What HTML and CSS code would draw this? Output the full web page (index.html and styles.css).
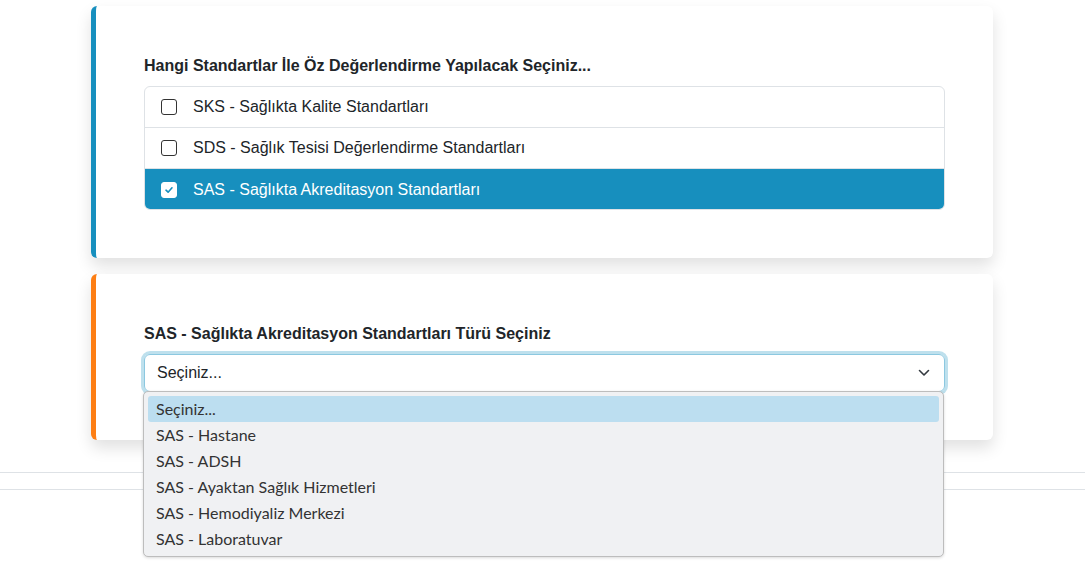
FILE: index.html
```html
<!DOCTYPE html>
<html lang="tr">
<head>
    <meta charset="UTF-8">
    <meta name="viewport" content="width=device-width, initial-scale=1.0">
    <title>Öz Değerlendirme</title>
    <link rel="stylesheet" href="styles.css">
</head>
<body>
    <div class="container">
        <div class="card card-blue">
            <label class="form-label">Hangi Standartlar İle Öz Değerlendirme Yapılacak Seçiniz...</label>
            <ul class="list-group">
                <li class="list-item">
                    <span class="check"></span>
                    SKS - Sağlıkta Kalite Standartları
                </li>
                <li class="list-item">
                    <span class="check"></span>
                    SDS - Sağlık Tesisi Değerlendirme Standartları
                </li>
                <li class="list-item active">
                    <span class="check checked">
                        <svg width="10" height="10" viewBox="0 0 10 10"><path d="M2 5.2 L4.1 7.2 L8 2.8" fill="none" stroke="#178fbe" stroke-width="1.6" stroke-linecap="round" stroke-linejoin="round"/></svg>
                    </span>
                    SAS - Sağlıkta Akreditasyon Standartları
                </li>
            </ul>
        </div>

        <div class="card card-orange">
            <label class="form-label">SAS - Sağlıkta Akreditasyon Standartları Türü Seçiniz</label>
            <div class="select-wrap">
                <div class="select">
                    <span>Seçiniz...</span>
                    <svg class="caret" width="12" height="8" viewBox="0 0 12 8"><path d="M1.5 1.5 L6 6 L10.5 1.5" fill="none" stroke="#343a40" stroke-width="1.6" stroke-linecap="round" stroke-linejoin="round"/></svg>
                </div>
                <!-- acik select listesi -->
                <ul class="options">
                    <li class="option selected">Seçiniz...</li>
                    <li class="option">SAS - Hastane</li>
                    <li class="option">SAS - ADSH</li>
                    <li class="option">SAS - Ayaktan Sağlık Hizmetleri</li>
                    <li class="option">SAS - Hemodiyaliz Merkezi</li>
                    <li class="option">SAS - Laboratuvar</li>
                </ul>
            </div>
        </div>
    </div>

    <div class="footer-line"></div>
</body>
</html>
```

FILE: styles.css
```css
body {
    font-family: "Liberation Sans", Arial, sans-serif;
    font-size: 16px;
    color: #212529;
    background-color: #fff;
    margin: 0;
    min-height: 100vh;
}

.container {
    width: 902px;
    margin-left: calc((100% - 903px) / 2);
    padding-top: 6px;
}

.card {
    background-color: #fff;
    border-radius: 6px;
    box-shadow: 0 8px 16px rgba(0, 0, 0, 0.12);
    padding: 48px;
    margin-bottom: 16px;
}

.card-blue {
    border-left: 5px solid #178fbe;
}

.card-orange {
    border-left: 5px solid #fd7e14;
}

.form-label {
    display: block;
    font-weight: bold;
    line-height: 24px;
    margin-bottom: 8px;
}

.list-group {
    list-style: none;
    margin: 0;
    padding: 0;
    border: 1px solid #dee2e6;
    border-radius: 6px;
    overflow: hidden;
}

.list-item {
    display: flex;
    align-items: center;
    height: 40px;
    padding: 0 16px;
    border-top: 1px solid #dee2e6;
}

.list-item:first-child {
    border-top: none;
}

.list-item.active {
    background-color: #178fbe;
    color: #fff;
    height: 41px;
    margin: 0 -1px -1px -1px;
    padding-left: 17px;
}

.check {
    width: 16px;
    height: 16px;
    box-sizing: border-box;
    border: 1px solid #333;
    border-radius: 3px;
    margin-right: 16px;
    display: flex;
    align-items: center;
    justify-content: center;
    background-color: #fff;
}

.check.checked {
    border-color: #fff;
}

.select-wrap {
    position: relative;
}

.select {
    display: flex;
    align-items: center;
    justify-content: space-between;
    height: 38px;
    box-sizing: border-box;
    padding: 0 14px 0 12px;
    border: 1px solid #8cc8e0;
    border-radius: 6px;
    box-shadow: 0 0 0 3px rgba(23, 143, 190, 0.28);
}

.options {
    position: absolute;
    top: 37px;
    left: -1px;
    width: 801px;
    box-sizing: border-box;
    list-style: none;
    margin: 0;
    padding: 4px;
    background-color: #f0f1f3;
    border: 1px solid #bdbdbd;
    border-radius: 5px;
    font-family: Lato, "Open Sans", sans-serif;
    color: #333;
    box-shadow: 0 1px 3px rgba(0, 0, 0, 0.15);
    z-index: 5;
}

.option {
    height: 26px;
    line-height: 26px;
    padding-left: 8px;
    border-radius: 3px;
}

.option.selected {
    background-color: #bcdef0;
}

.footer-line {
    margin-top: 32px;
    height: 16px;
    border-top: 1px solid #dee2e6;
    border-bottom: 1px solid #dee2e6;
}
```
